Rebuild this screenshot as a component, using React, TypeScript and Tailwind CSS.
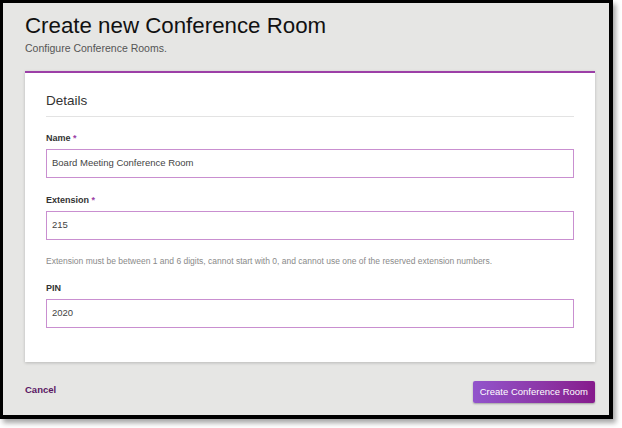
import React from "react";

type FieldProps = {
  label: string;
  value: string;
  required?: boolean;
};

function Field({ label, value, required }: FieldProps) {
  return (
    <div>
      <label className="block text-[9px] leading-[12px] font-bold text-[#333]">
        {label}
        {required && <span className="text-[#9b3fa6]"> *</span>}
      </label>
      <div className="mt-[5px] h-[29px] border border-[#c98fd0] bg-white px-[5px] flex items-center text-[9.5px] text-[#444]">
        {value}
      </div>
    </div>
  );
}

export default function App() {
  return (
    <div
      className="w-[622px] h-[428px] bg-white overflow-hidden"
      style={{ fontFamily: '"Liberation Sans", Arial, sans-serif' }}
    >
      <div className="w-[613px] h-[419px] border-t-[3px] border-l-[3px] border-r-4 border-b-4 border-black shadow-[3px_4px_5px_rgba(0,0,0,0.35)]">
        <div className="h-full bg-[#e6e6e4] pt-[10px] pl-[22px] pr-[14px] flex flex-col">
          {/* Header */}
          <h1 className="text-[22.3px] leading-[26px] text-[#111]">Create new Conference Room</h1>
          <p className="mt-[2px] text-[10.5px] leading-[14px] text-[#555]">Configure Conference Rooms.</p>

          {/* Card */}
          <div className="mt-[16px] bg-white border-t-2 border-[#9c3fa7] shadow-[0_1px_3px_rgba(0,0,0,0.2)] pt-[20px] pb-[34px] pl-[21px] pr-[21px]">
            <h2 className="text-[13.5px] leading-[16px] text-[#333]">Details</h2>
            <div className="mt-[7px] h-px bg-[#e3e3e3]" />

            <div className="mt-[15px]">
              <Field label="Name" value="Board Meeting Conference Room" required />
            </div>
            <div className="mt-[16px]">
              <Field label="Extension" value="215" required />
            </div>
            <p className="mt-[15px] text-[8.5px] leading-[12px] text-[#8a8a8a]">
              Extension must be between 1 and 6 digits, cannot start with 0, and cannot use one of the reserved extension numbers.
            </p>
            <div className="mt-[15px]">
              <Field label="PIN" value="2020" />
            </div>
          </div>

          {/* Footer */}
          <div className="mt-[19px] flex justify-between items-start">
            <button type="button" className="pt-[3px] text-[9.5px] leading-[12px] font-bold text-[#5a1763]">
              Cancel
            </button>
            <button
              type="button"
              className="h-[22px] px-[7px] rounded-[2px] bg-gradient-to-r from-[#9254cc] to-[#861a8c] text-white text-[9.5px] shadow-[0_1px_2px_rgba(0,0,0,0.3)]"
            >
              Create Conference Room
            </button>
          </div>
        </div>
      </div>
    </div>
  );
}
